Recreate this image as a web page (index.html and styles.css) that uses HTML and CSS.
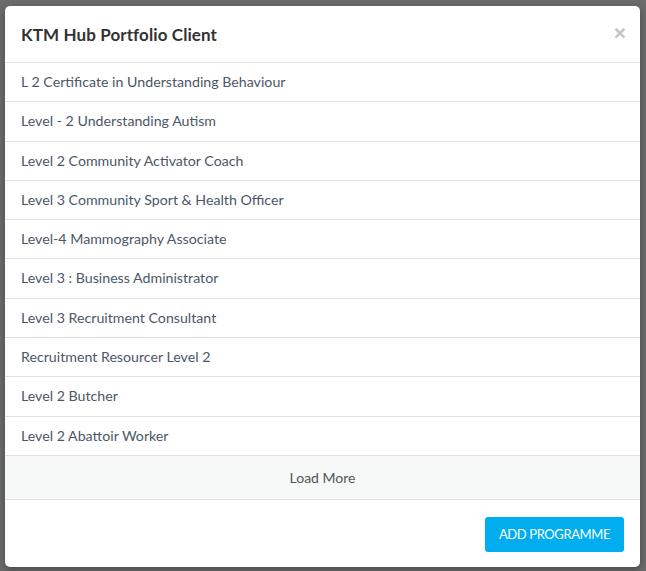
FILE: index.html
```html
<!DOCTYPE html>
<html lang="en">
<head>
  <meta charset="UTF-8">
  <meta name="viewport" content="width=device-width, initial-scale=1">
  <title>KTM Hub Portfolio Client</title>
  <link rel="stylesheet" href="styles.css">
</head>
<body>
  <div class="backdrop">
    <div class="modal">
      <div class="modal-header">
        <h3>KTM Hub Portfolio Client</h3>
        <button class="close" type="button">&times;</button>
      </div>
      <ul class="programme-list">
        <li>L 2 Certificate in Understanding Behaviour</li>
        <li>Level - 2 Understanding Autism</li>
        <li>Level 2 Community Activator Coach</li>
        <li>Level 3 Community Sport &amp; Health Officer</li>
        <li>Level-4 Mammography Associate</li>
        <li>Level 3 : Business Administrator</li>
        <li>Level 3 Recruitment Consultant</li>
        <li>Recruitment Resourcer Level 2</li>
        <li>Level 2 Butcher</li>
        <li>Level 2 Abattoir Worker</li>
      </ul>
      <div class="load-more">Load More</div>
      <div class="modal-footer">
        <button class="add-btn" type="button">ADD PROGRAMME</button>
      </div>
    </div>
  </div>
</body>
</html>
```

FILE: styles.css
```css
* { margin: 0; padding: 0; box-sizing: border-box; }
html, body { height: 100%; }
body { font-family: Lato, 'Open Sans', sans-serif; background: #6c6c6c; color: #333; overflow: hidden; }
.backdrop { padding: 6px 6px 0 5px; height: 100%; }
.modal { width: 635px; height: 561px; background: #fff; border-radius: 5px; box-shadow: 0 3px 9px rgba(0,0,0,0.35); display: flex; flex-direction: column; overflow: hidden; }
.modal-header { display: flex; align-items: center; justify-content: space-between; height: 57px; flex-shrink: 0; padding: 0 16px; border-bottom: 1px solid #e5e5e5; }
.modal-header h3 { font-size: 17px; font-weight: 700; color: #333; letter-spacing: 0.1px; }
.close { border: none; background: none; font-family: Arial, 'Liberation Sans', sans-serif; font-size: 21px; font-weight: 700; color: #c4c4c4; line-height: 1; margin-top: -4px; margin-right: -2px; }
.programme-list { list-style: none; flex-shrink: 0; }
.programme-list li { padding: 10px 16px; line-height: 18.3px; height: 39.3px; font-size: 14.2px; color: #4b5768; border-bottom: 1px solid #e0e0e0; }
.load-more { height: 44px; flex-shrink: 0; display: flex; align-items: center; justify-content: center; background: #f7f8f8; border-bottom: 1px solid #e0e0e0; font-size: 14px; color: #555; }
.modal-footer { flex: 1; display: flex; justify-content: flex-end; align-items: flex-start; padding: 17px 16px 0; }
.add-btn { height: 35px; padding: 0 14px; border: none; border-radius: 3px; background: #00adee; color: #fff; font-family: inherit; font-size: 13px; letter-spacing: -0.4px; }
```
